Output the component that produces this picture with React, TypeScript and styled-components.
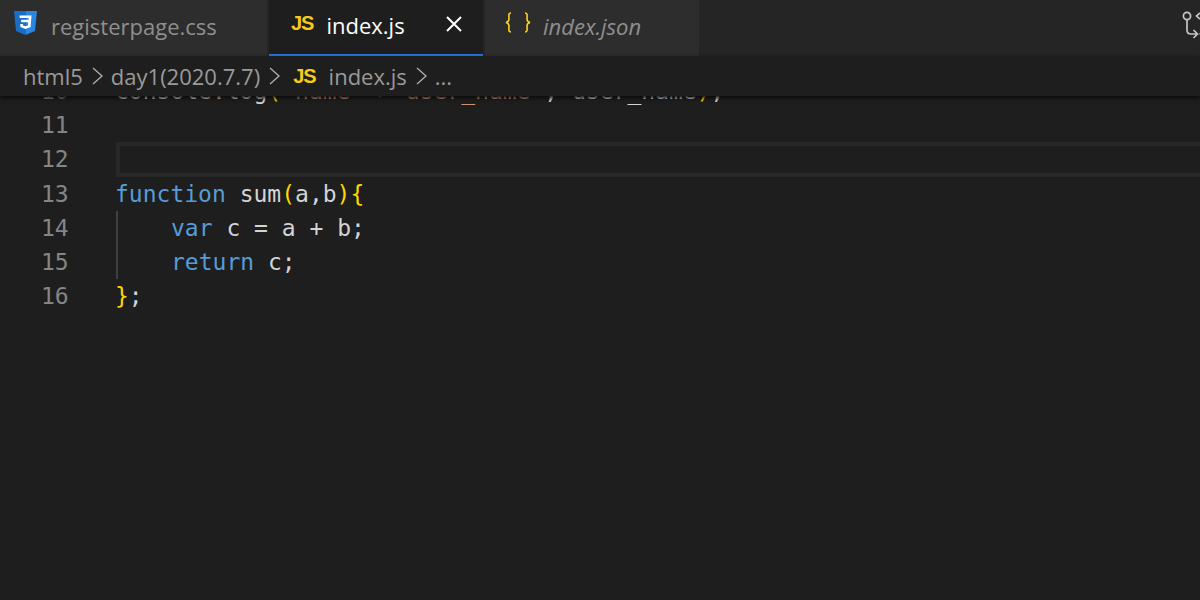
import * as React from 'react';
import styled, { createGlobalStyle } from 'styled-components';

const Global = createGlobalStyle`
  html, body {
    margin: 0;
    padding: 0;
    background: #1e1e1e;
  }
`;

const Page = styled.div`
  width: 1200px;
  height: 600px;
  overflow: hidden;
  display: flex;
  flex-direction: column;
  background: #1e1e1e;
  font-family: 'Open Sans', 'Noto Sans', sans-serif;
`;

const TabBar = styled.div`
  height: 56px;
  flex: none;
  display: flex;
  background: #252526;
  position: relative;
  overflow: hidden;
`;

const Tab = styled.div<{ $active?: boolean; $width: number; $pad: number }>`
  width: ${p => p.$width}px;
  margin-right: 2px;
  box-sizing: border-box;
  padding-left: ${p => p.$pad}px;
  display: flex;
  align-items: center;
  font-size: 22px;
  background: ${p => (p.$active ? '#1e1e1e' : '#2d2d2d')};
  color: ${p => (p.$active ? '#ffffff' : '#8f8f8f')};
  border-bottom: ${p => (p.$active ? '2px solid #2a78e4' : '0')};
`;

const TabName = styled.span<{ $italic?: boolean; $gap: number }>`
  margin-left: ${p => p.$gap}px;
  margin-bottom: 5px;
  font-style: ${p => (p.$italic ? 'italic' : 'normal')};
`;

const TabIcon = styled.svg`
  flex: none;
  margin-bottom: 10px;
`;

const CloseIcon = styled.svg`
  flex: none;
  margin-left: 40px;
  margin-bottom: 6px;
`;

const JsBadge = styled.span<{ $raised?: boolean }>`
  font-family: 'Liberation Sans', Arial, sans-serif;
  font-weight: 700;
  font-size: 20px;
  letter-spacing: -1px;
  color: #f7ca18;
  margin-bottom: ${p => (p.$raised ? '8px' : '0')};
`;

const BranchIcon = styled.svg`
  position: absolute;
  top: 10px;
  left: 1182px;
`;

const Crumbs = styled.div`
  height: 40px;
  flex: none;
  display: flex;
  align-items: center;
  padding-left: 23px;
  font-size: 22px;
  color: #9a9a9a;
  background: #1e1e1e;
  box-shadow: 0 2px 4px #0a0a0a;
  position: relative;
  z-index: 1;
`;

const Chevron = styled.svg<{ $after?: number }>`
  flex: none;
  margin: 0 ${p => p.$after ?? 8}px 0 9px;
`;

const CrumbName = styled.span`
  margin-left: 13px;
`;

const Editor = styled.div`
  flex: 1;
  overflow: hidden;
  font-family: Consolas, 'DejaVu Sans Mono', 'Liberation Mono', monospace;
  font-size: 23px;
`;

const Lines = styled.div`
  margin-top: -22px;
`;

const Line = styled.div`
  height: 34.2px;
  line-height: 34.2px;
  display: flex;
  white-space: pre;
`;

const Gutter = styled.div`
  width: 116px;
  flex: none;
  box-sizing: border-box;
  padding-left: 41px;
  color: #858585;
`;

const Code = styled.div<{ $current?: boolean; $guide?: boolean }>`
  flex: 1;
  box-sizing: border-box;
  color: #d4d4d4;
  text-indent: -1px;
  border: ${p => (p.$current ? '4px solid #282828' : '0')};
  border-right: 0;
  border-left: ${p => (p.$guide ? '2px solid #404040' : p.$current ? '4px solid #282828' : '0')};
`;

const Keyword = styled.span`
  color: #569cd6;
`;

const Bracket = styled.span`
  color: #ffd700;
`;

const Str = styled.span`
  color: #ce9178;
`;

const Indent = styled.span`
  display: inline-block;
  width: 54px;
`;

const ArrowIcon = ({ after }: { after?: number }) => (
  <Chevron $after={after} width="11" height="18" viewBox="0 0 11 18" fill="none" stroke="#b0b0b0" strokeWidth="1.3">
    <path d="M1 1 L10 9 L1 17" />
  </Chevron>
);

export default function App() {
  return (
    <Page>
      <Global />
      <TabBar>
        <Tab $width={267} $pad={14}>
          <TabIcon width="23" height="24" viewBox="0 0 23 24">
            <path d="M0 0 H11.5 V24 L2 20 Z" fill="#1a6fc4" />
            <path d="M11.5 0 H23 L21 20 L11.5 24 Z" fill="#2b86e0" />
            <path d="M5.5 4.5 H17.5 L16.6 16 L11.5 18 L6.4 16 L6.2 13 H8.9 L9.1 14.4 L11.5 15.2 L13.9 14.4 L14.2 11.2 H7.2 V8.8 H14.5 L14.7 7 H5.7 Z" fill="#ffffff" />
          </TabIcon>
          <TabName $gap={14}>registerpage.css</TabName>
        </Tab>
        <Tab $active $width={214} $pad={22}>
          <JsBadge $raised>JS</JsBadge>
          <TabName $gap={13}>index.js</TabName>
          <CloseIcon width="18" height="18" viewBox="0 0 18 18" stroke="#ffffff" strokeWidth="2">
            <path d="M2 2 L16 16 M16 2 L2 16" />
          </CloseIcon>
        </Tab>
        <Tab $width={214} $pad={20}>
          <TabIcon width="26" height="24" viewBox="0 0 26 24" fill="none" stroke="#ffd21a" strokeWidth="1.6">
            <path d="M6 2 C3 2 4 5 4 8 C4 10 3 11 1 11.5 C3 12 4 13 4 15 C4 18 3 21 6 21" />
            <path d="M20 2 C23 2 22 5 22 8 C22 10 23 11 25 11.5 C23 12 22 13 22 15 C22 18 23 21 20 21" />
          </TabIcon>
          <TabName $italic $gap={12}>index.json</TabName>
        </Tab>
        <BranchIcon width="18" height="30" viewBox="0 0 18 30" fill="none" stroke="#c5c5c5" strokeWidth="1.7">
          <circle cx="5" cy="6" r="3.6" />
          <path d="M5 10 V20 Q5 24 9 24 H15 M11.5 20 L15.5 24 L11.5 28" />
          <path d="M18 3 L14.5 6 L18 9" />
          <path d="M17 24 H18" stroke="#3b8eea" />
        </BranchIcon>
      </TabBar>
      <Crumbs>
        html5
        <ArrowIcon />
        day1(2020.7.7)
        <ArrowIcon after={13} />
        <JsBadge>JS</JsBadge>
        <CrumbName>index.js</CrumbName>
        <ArrowIcon />
        ...
      </Crumbs>
      <Editor>
        <Lines>
          <Line>
            <Gutter>10</Gutter>
            <Code>
              console.log<Bracket>(</Bracket><Str>"name--&gt; user_name"</Str>, user_name<Bracket>)</Bracket>;
            </Code>
          </Line>
          <Line>
            <Gutter>11</Gutter>
            <Code />
          </Line>
          <Line>
            <Gutter>12</Gutter>
            <Code $current />
          </Line>
          <Line>
            <Gutter>13</Gutter>
            <Code>
              <Keyword>function</Keyword> sum<Bracket>(</Bracket>a,b<Bracket>)</Bracket><Bracket>{'{'}</Bracket>
            </Code>
          </Line>
          <Line>
            <Gutter>14</Gutter>
            <Code $guide>
              <Indent />
              <Keyword>var</Keyword> c = a + b;
            </Code>
          </Line>
          <Line>
            <Gutter>15</Gutter>
            <Code $guide>
              <Indent />
              <Keyword>return</Keyword> c;
            </Code>
          </Line>
          <Line>
            <Gutter>16</Gutter>
            <Code>
              <Bracket>{'}'}</Bracket>;
            </Code>
          </Line>
        </Lines>
      </Editor>
    </Page>
  );
}
